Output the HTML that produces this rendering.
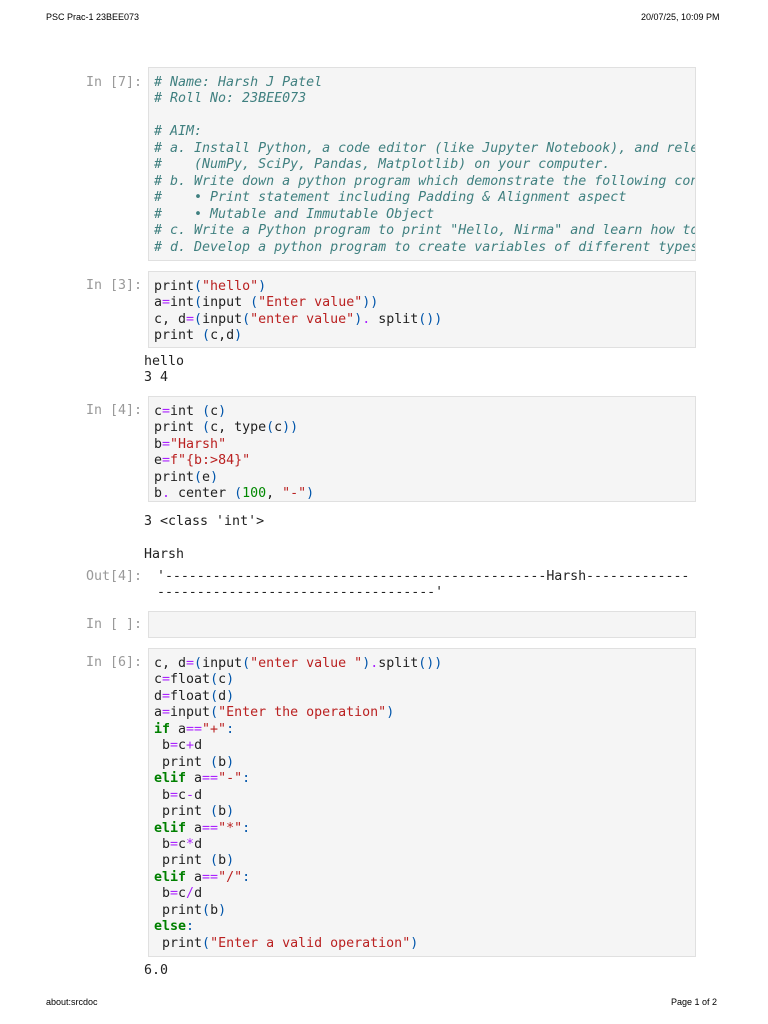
<!DOCTYPE html>
<html><head><meta charset="utf-8"><style>
body{margin:0;width:768px;height:1024px;background:#fff;position:relative;overflow:hidden;font-family:"DejaVu Sans Mono",monospace;}
.hdr{position:absolute;font-family:"Liberation Sans",sans-serif;font-size:9px;color:#000;}
.box{position:absolute;left:148px;width:548px;background:#f5f5f5;border:1px solid #e0e0e0;box-sizing:border-box;overflow:hidden;}
pre{margin:0;font-family:"DejaVu Sans Mono",monospace;font-size:13.3px;line-height:16.45px;color:#222;white-space:pre;}
.box pre{position:absolute;left:5px;top:7px;}
.p{position:absolute;width:142px;text-align:right;left:0;font-size:13.3px;color:#999;font-family:"DejaVu Sans Mono",monospace;line-height:16.45px;}
.out{position:absolute;left:144px;}
.c{color:#408080;font-style:italic}.s{color:#ba2121}.k{color:#008000;font-weight:bold}.o{color:#aa22ff}.b{color:#0055aa}.n{color:#008800}
</style></head><body>
<div class="hdr" style="left:46px;top:12px">PSC Prac-1 23BEE073</div>
<div class="hdr" style="left:641px;top:12px">20/07/25, 10:09 PM</div>

<div class="p" style="top:75px">In [7]:</div>
<div class="box" style="top:67px;height:194px"><pre><span class="c"># Name: Harsh J Patel
# Roll No: 23BEE073

# AIM:
# a. Install Python, a code editor (like Jupyter Notebook), and relevant
#    (NumPy, SciPy, Pandas, Matplotlib) on your computer.
# b. Write down a python program which demonstrate the following concepts
#    • Print statement including Padding &amp; Alignment aspect
#    • Mutable and Immutable Object
# c. Write a Python program to print "Hello, Nirma" and learn how to
# d. Develop a python program to create variables of different types</span></pre></div>

<div class="p" style="top:278px">In [3]:</div>
<div class="box" style="top:271px;height:77px"><pre>print<span class="b">(</span><span class="s">"hello"</span><span class="b">)</span>
a<span class="o">=</span>int<span class="b">(</span>input <span class="b">(</span><span class="s">"Enter value"</span><span class="b">))</span>
c, d<span class="o">=</span><span class="b">(</span>input<span class="b">(</span><span class="s">"enter value"</span><span class="b">)</span><span class="o">.</span> split<span class="b">())</span>
print <span class="b">(</span>c,d<span class="b">)</span></pre></div>
<pre class="out" style="top:354px">hello
3 4</pre>

<div class="p" style="top:403px">In [4]:</div>
<div class="box" style="top:396px;height:106px"><pre>c<span class="o">=</span>int <span class="b">(</span>c<span class="b">)</span>
print <span class="b">(</span>c, type<span class="b">(</span>c<span class="b">))</span>
b<span class="o">=</span><span class="s">"Harsh"</span>
e<span class="o">=</span><span class="s">f"{b:&gt;84}"</span>
print<span class="b">(</span>e<span class="b">)</span>
b<span class="o">.</span> center <span class="b">(</span><span class="n">100</span>, <span class="s">"-"</span><span class="b">)</span></pre></div>
<pre class="out" style="top:514px">3 &lt;class 'int'&gt;

Harsh</pre>
<div class="p" style="top:569px">Out[4]:</div>
<pre style="position:absolute;left:157px;top:569px;letter-spacing:-0.06px">'------------------------------------------------Harsh-------------
-----------------------------------'</pre>

<div class="p" style="top:617px">In [ ]:</div>
<div class="box" style="top:611px;height:27px"></div>

<div class="p" style="top:655px">In [6]:</div>
<div class="box" style="top:648px;height:309px"><pre>c, d<span class="o">=</span><span class="b">(</span>input<span class="b">(</span><span class="s">"enter value "</span><span class="b">)</span><span class="o">.</span>split<span class="b">())</span>
c<span class="o">=</span>float<span class="b">(</span>c<span class="b">)</span>
d<span class="o">=</span>float<span class="b">(</span>d<span class="b">)</span>
a<span class="o">=</span>input<span class="b">(</span><span class="s">"Enter the operation"</span><span class="b">)</span>
<span class="k">if</span> a<span class="o">==</span><span class="s">"+"</span><span class="b">:</span>
 b<span class="o">=</span>c<span class="o">+</span>d
 print <span class="b">(</span>b<span class="b">)</span>
<span class="k">elif</span> a<span class="o">==</span><span class="s">"-"</span><span class="b">:</span>
 b<span class="o">=</span>c<span class="o">-</span>d
 print <span class="b">(</span>b<span class="b">)</span>
<span class="k">elif</span> a<span class="o">==</span><span class="s">"*"</span><span class="b">:</span>
 b<span class="o">=</span>c<span class="o">*</span>d
 print <span class="b">(</span>b<span class="b">)</span>
<span class="k">elif</span> a<span class="o">==</span><span class="s">"/"</span><span class="b">:</span>
 b<span class="o">=</span>c<span class="o">/</span>d
 print<span class="b">(</span>b<span class="b">)</span>
<span class="k">else</span><span class="b">:</span>
 print<span class="b">(</span><span class="s">"Enter a valid operation"</span><span class="b">)</span></pre></div>
<pre class="out" style="top:963px">6.0</pre>

<div class="hdr" style="left:46px;top:997px">about:srcdoc</div>
<div class="hdr" style="left:671px;top:997px">Page 1 of 2</div>
</body></html>
